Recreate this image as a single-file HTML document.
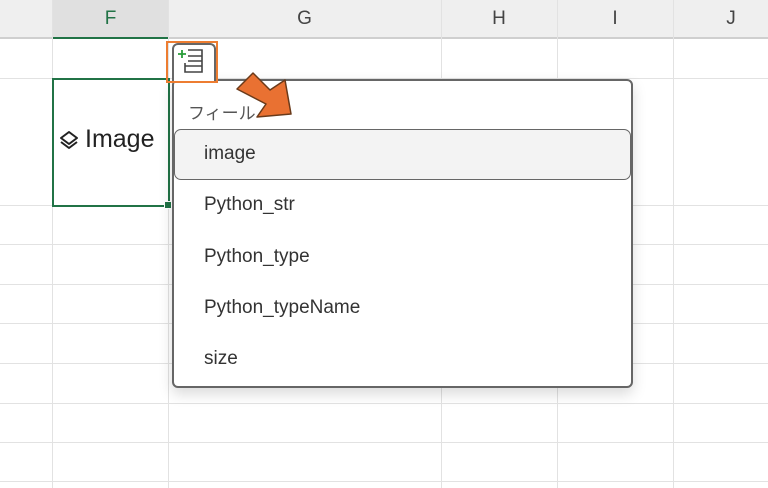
<!DOCTYPE html><html><head><style>
body{margin:0;width:768px;height:488px;overflow:hidden;background:#fff;font-family:"Liberation Sans","Noto Sans CJK JP",sans-serif;position:relative}
.a{position:absolute}
.hdr{left:0;top:0;width:768px;height:37px;background:#efefef;border-bottom:2px solid #cfcfcf}
.vl{position:absolute;top:0;width:1px;height:488px;background:#e2e2e2}
.hl{position:absolute;left:0;width:768px;height:1px;background:#e2e2e2}
.ch{position:absolute;top:8px;font-size:19px;color:#444;text-align:center}
.item{position:absolute;left:30px;font-size:19px;color:#333}
</style></head><body>
<div class="a hdr"></div>
<div class="a" style="left:53px;top:0;width:115px;height:37px;background:#e0e0e0;border-bottom:2px solid #217346"></div>
<div class="vl" style="left:52px"></div><div class="vl" style="left:168px"></div><div class="vl" style="left:441px"></div><div class="vl" style="left:557px"></div><div class="vl" style="left:673px"></div>
<div class="hl" style="top:78px"></div><div class="hl" style="top:205px"></div><div class="hl" style="top:244px"></div><div class="hl" style="top:284px"></div><div class="hl" style="top:323px"></div><div class="hl" style="top:363px"></div><div class="hl" style="top:403px"></div><div class="hl" style="top:442px"></div><div class="hl" style="top:481px"></div>
<div class="ch" style="left:53px;width:115px;color:#217346">F</div>
<div class="ch" style="left:168px;width:273px">G</div>
<div class="ch" style="left:441px;width:116px">H</div>
<div class="ch" style="left:557px;width:116px">I</div>
<div class="ch" style="left:673px;width:116px">J</div>
<div class="a" style="left:52px;top:78px;width:114px;height:125px;border:2px solid #217346;background:#fff"></div>
<div class="a" style="left:164px;top:201px;width:6px;height:6px;background:#217346;border:1px solid #fff"></div>
<div class="a" style="left:58px;top:125px;font-size:25px;color:#222;display:flex;align-items:center">
<svg width="22" height="22" viewBox="0 0 22 22" fill="none" stroke="#222" stroke-width="2" stroke-linejoin="round"><path d="M11 3 L19 9 L11 15 L3 9 Z"/><path d="M3 13 L11 19 L19 13"/></svg><span style="margin-left:5px">Image</span></div>
<div class="a" style="left:172px;top:79px;width:457px;height:305px;border:2px solid #666;border-radius:6px;background:#fff;box-shadow:0 6px 14px rgba(0,0,0,.15)"></div>
<div class="a" style="left:188px;top:99px;font-size:17px;color:#555">フィール</div>
<div class="a" style="left:174px;top:129px;width:457px;height:51px;border:1.5px solid #666;border-radius:7px;background:#f3f3f3;box-sizing:border-box"></div>
<div class="a" style="left:174px;top:0;width:457px">
<div class="item" style="top:143px">image</div>
<div class="item" style="top:194px">Python_str</div>
<div class="item" style="top:246px">Python_type</div>
<div class="item" style="top:297px">Python_typeName</div>
<div class="item" style="top:348px">size</div></div>
<div class="a" style="left:172px;top:43px;width:40px;height:36px;border:2px solid #666;border-bottom:none;border-radius:6px 6px 0 0;background:#fff"></div>
<svg class="a" style="left:176px;top:46px" width="30" height="30" viewBox="0 0 30 30" fill="none"><path d="M6 4v8M2 8h8" stroke="#2a9d3a" stroke-width="1.8"/><path d="M12 4h14v22H9v-9M9 20h17M12 10h14M12 15h14" stroke="#444" stroke-width="1.6"/></svg>
<div class="a" style="left:166px;top:41px;width:52px;height:42px;border:2px solid #ed7d31;box-sizing:border-box"></div>
<svg class="a" style="left:0;top:0" width="768" height="488"><path d="M237 89 L253 73 L270 90 L285 80 L291 114 L257 117 L266 104 Z" fill="#e97132" stroke="#6a3a1a" stroke-width="1.5" stroke-linejoin="round"/></svg>
</body></html>
